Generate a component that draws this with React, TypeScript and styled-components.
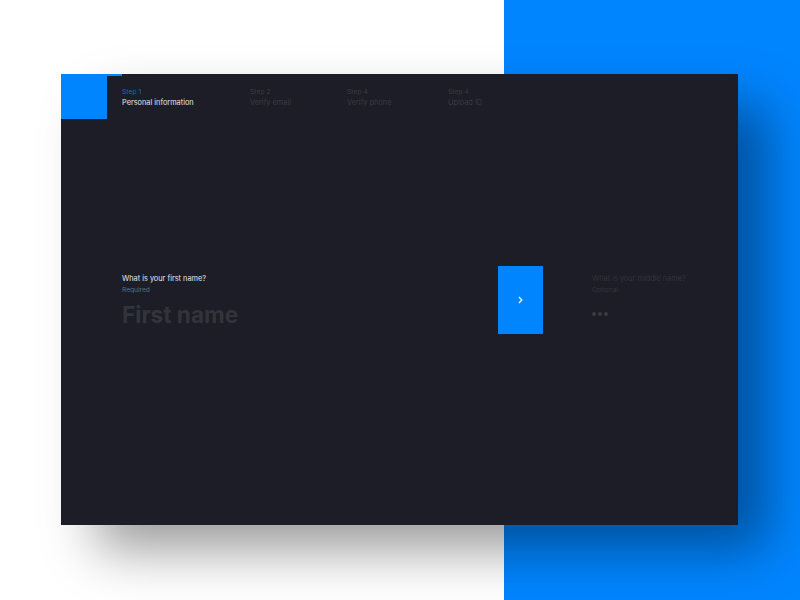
import { createGlobalStyle, styled } from "styled-components";

const GlobalStyle = createGlobalStyle`
  html, body {
    margin: 0;
    padding: 0;
  }
  body {
    font-family: "Inter", "Noto Sans", sans-serif;
  }
`;

const Page = styled.div`
  width: 800px;
  height: 600px;
  padding: 74px 0 0 61px;
  box-sizing: border-box;
  overflow: hidden;
  background: linear-gradient(to right, #ffffff 504px, #0085ff 504px);
`;

const Card = styled.main`
  position: relative;
  width: 677px;
  height: 451px;
  padding: 13px 0 0 61px;
  box-sizing: border-box;
  display: flex;
  flex-direction: column;
  background: #1c1d26;
  box-shadow: 32px 28px 50px -4px rgba(0, 0, 0, 0.4);
`;

const CornerBlock = styled.div`
  position: absolute;
  left: 0;
  top: 0;
  width: 46px;
  height: 45px;
  background: #0085ff;
`;

const ProgressLine = styled.div`
  position: absolute;
  left: 0;
  top: 0;
  width: 61px;
  height: 1.5px;
  background: #0085ff;
`;

const Steps = styled.nav`
  display: flex;
`;

const Step = styled.div<{ $width: number }>`
  width: ${(p) => p.$width}px;
  display: flex;
  flex-direction: column;
`;

const StepNumber = styled.span<{ $active?: boolean }>`
  font-size: 6.8px;
  line-height: 10px;
  color: ${(p) => (p.$active ? "#0a6fc9" : "#3a3b43")};
`;

const StepName = styled.span<{ $active?: boolean }>`
  font-size: 7.35px;
  line-height: 11px;
  white-space: nowrap;
  color: ${(p) => (p.$active ? "#e8e8ea" : "#3a3b43")};
`;

const Body = styled.section`
  display: flex;
  align-items: flex-start;
  margin-top: 158px;
`;

const Field = styled.div<{ $width: number }>`
  width: ${(p) => p.$width}px;
  padding-top: 7px;
  display: flex;
  flex-direction: column;
`;

const Question = styled.div<{ $muted?: boolean }>`
  font-size: 7.35px;
  line-height: 12px;
  white-space: nowrap;
  color: ${(p) => (p.$muted ? "#33343c" : "#e8e8ea")};
`;

const Hint = styled.div<{ $muted?: boolean }>`
  font-size: 6.6px;
  line-height: 10px;
  color: ${(p) => (p.$muted ? "#33343c" : "#6d6e75")};
`;

const NameInput = styled.div`
  margin-top: 6px;
  font-size: 22.6px;
  line-height: 28px;
  font-weight: 700;
  color: #33343b;
`;

const NextButton = styled.button`
  width: 45px;
  height: 68px;
  margin-right: 49px;
  padding: 0;
  border: 0;
  flex: none;
  display: flex;
  align-items: center;
  justify-content: center;
  background: #0085ff;
`;

const Dots = styled.div`
  display: flex;
  gap: 2px;
  margin-top: 17px;
`;

const Dot = styled.span`
  width: 4px;
  height: 4px;
  border-radius: 50%;
  background: #3a3b43;
`;

const steps = [
  { number: "Step 1", name: "Personal information", width: 128, active: true },
  { number: "Step 2", name: "Verify email", width: 97 },
  { number: "Step 4", name: "Verify phone", width: 101 },
  { number: "Step 4", name: "Upload ID", width: 100 },
];

export default function App() {
  return (
    <Page>
      <GlobalStyle />
      <Card>
        <CornerBlock />
        <ProgressLine />
        <Steps>
          {steps.map((s) => (
            <Step key={s.name} $width={s.width}>
              <StepNumber $active={s.active}>{s.number}</StepNumber>
              <StepName $active={s.active}>{s.name}</StepName>
            </Step>
          ))}
        </Steps>
        <Body>
          <Field $width={376}>
            <Question>What is your first name?</Question>
            <Hint>Required</Hint>
            <NameInput>First name</NameInput>
          </Field>
          <NextButton aria-label="Next">
            <svg width="6" height="8" viewBox="0 0 6 8" fill="none">
              <path d="M1 1L3.8 4L1 7" stroke="#e6f3ff" strokeWidth="1.4" />
            </svg>
          </NextButton>
          <Field $width={110}>
            <Question $muted>What is your middle name?</Question>
            <Hint $muted>Optional</Hint>
            <Dots>
              <Dot />
              <Dot />
              <Dot />
            </Dots>
          </Field>
        </Body>
      </Card>
    </Page>
  );
}
